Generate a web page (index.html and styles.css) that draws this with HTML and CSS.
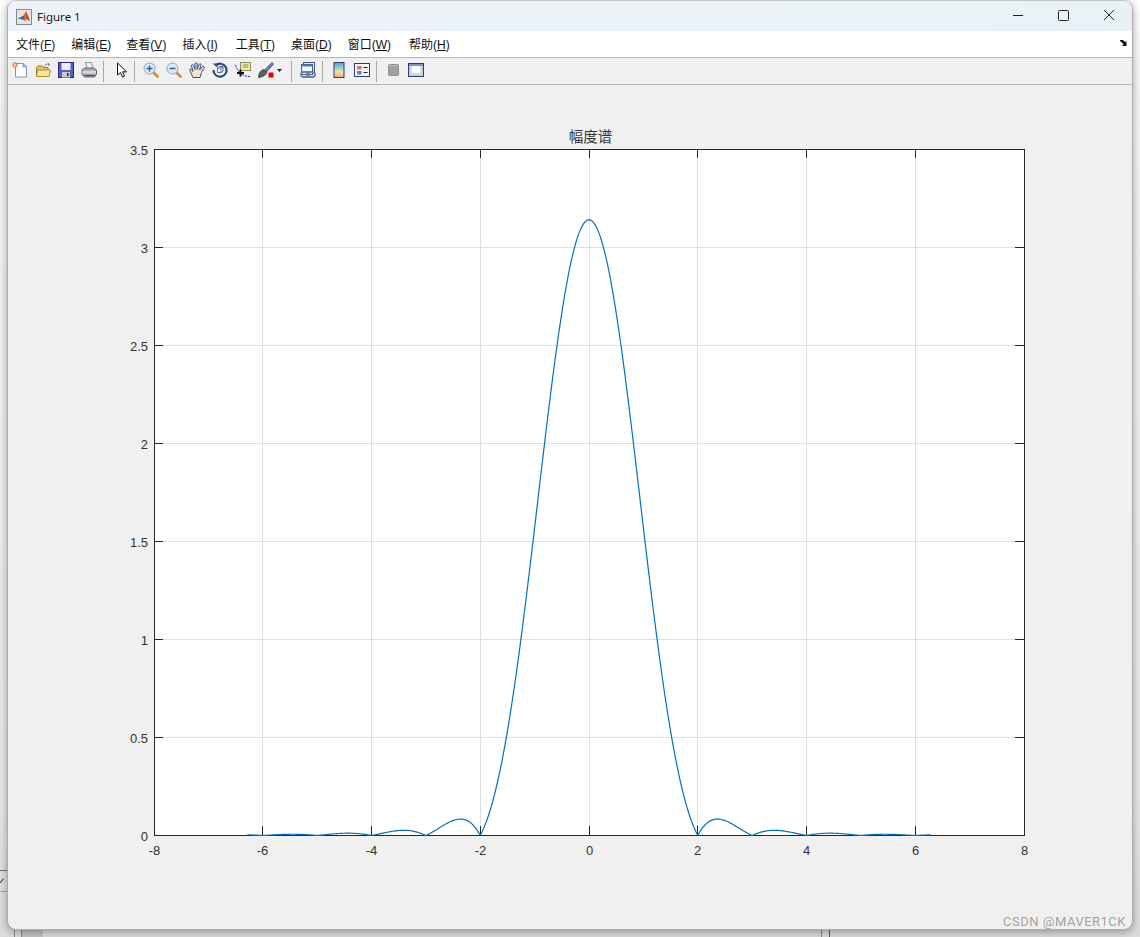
FILE: index.html
```html
<!DOCTYPE html>
<html lang="en">
<head>
    <meta charset="UTF-8">
    <title>Figure 1</title>
    <link rel="stylesheet" href="styles.css">
</head>
<body>
    <!-- bits of the windows behind the figure -->
    <div class="behind behind-row">
        <svg class="behind-pencil" viewBox="0 0 5 7"><path d="M0 6l1-2 3-4 1 1-3 4z" fill="#666"/></svg>
    </div>
    <div class="behind behind-strip"></div>
    <div class="behind behind-line1"></div>
    <div class="behind behind-line2"></div>
    <div class="behind behind-line3"></div>
    <div class="behind behind-line4"></div>

    <div class="window">
        <div class="titlebar">
            <svg class="app-icon" viewBox="0 0 16 16">
                <rect x="0.5" y="0.5" width="15" height="15" fill="#e4e4e4" stroke="#8a8a8a"/>
                <path d="M2 9.5l3-1.5 2-1 3-5 1.500 4L14 12l-3-2-2 2-3-2z" fill="#e8641b"/>
                <path d="M2 9.5l3-1.500 2-1 2 1-2 3-2-1z" fill="#2a6fb5"/>
                <path d="M10 2l1.500 4L14 12l-3-2z" fill="#c8351a"/>
            </svg>
            <span class="title-text">Figure 1</span>
            <div class="win-buttons">
                <svg class="win-btn" viewBox="0 0 46 30"><path d="M19 14.500h10" stroke="#222" fill="none"/></svg>
                <svg class="win-btn" viewBox="0 0 46 30"><rect x="18.500" y="9.500" width="10" height="10" rx="1" stroke="#222" fill="none"/></svg>
                <svg class="win-btn" viewBox="0 0 46 30"><path d="M18 9l10 10M28 9L18 19" stroke="#222" fill="none"/></svg>
            </div>
        </div>

        <div class="menubar">
            <span class="menu-item">文件(<u>F</u>)</span>
            <span class="menu-item menu-narrow">编辑(<u>E</u>)</span>
            <span class="menu-item">查看(<u>V</u>)</span>
            <span class="menu-item menu-wide">插入(<u>I</u>)</span>
            <span class="menu-item">工具(<u>T</u>)</span>
            <span class="menu-item">桌面(<u>D</u>)</span>
            <span class="menu-item menu-wide">窗口(<u>W</u>)</span>
            <span class="menu-item">帮助(<u>H</u>)</span>
            <svg class="dock-arrow" viewBox="0 0 7 6">
                <path d="M0 0h3l2 2 1.500-1v5H2l1.500-1.500L1 1.500H0z" fill="#111"/>
            </svg>
        </div>

        <div class="toolbar">
            <!-- new -->
            <div class="tool"><svg class="icon" viewBox="0 0 16 16">
                <path d="M3.500 1.500h7.500l3.500 3.500v10H3.500z" fill="#fff" stroke="#7f93b5"/>
                <path d="M11 1.500V5h3.500z" fill="#d5deea" stroke="#7f93b5"/>
                <circle cx="3" cy="3" r="2.200" fill="#fbc8a8" stroke="#e2683a"/>
            </svg></div>
            <!-- open -->
            <div class="tool"><svg class="icon" viewBox="0 0 16 16">
                <path d="M1.500 14V5.500L3 4h4l1 1.500h5V14z" fill="#e9c65c" stroke="#9a8132"/>
                <path d="M1.500 14.500l1-6.500h13l-1.500 6.500z" fill="#fbe596" stroke="#a98c36"/>
                <path d="M9.500 4.500C10 2.500 12 1.500 14 2.500M13 1l1.500 1.500L13 4" fill="none" stroke="#6d87a8"/>
            </svg></div>
            <!-- save -->
            <div class="tool"><svg class="icon" viewBox="0 0 16 16">
                <rect x="0.500" y="0.500" width="15" height="15" fill="#5a5cbc" stroke="#2b2b78"/>
                <rect x="3.500" y="1" width="9" height="7" fill="#eeeef8"/>
                <rect x="4" y="10" width="8" height="5.500" fill="#c9c9d2"/>
                <rect x="9" y="11" width="1.500" height="3" fill="#222"/>
            </svg></div>
            <!-- print -->
            <div class="tool"><svg class="icon" viewBox="0 0 16 16">
                <path d="M4.500 0.500h6l1.500 6H6z" fill="#eef0f2" stroke="#8c9298"/>
                <path d="M1 8l3-2h8.500L15.500 8v4l-2 3H3.500L1 12z" fill="#a9adb1" stroke="#62666a"/>
                <path d="M1.500 9h13.500v2.500H1.500z" fill="#d8dadc"/>
                <path d="M3.500 13.500h10" stroke="#44474a"/>
            </svg></div>
            <div class="tool-sep"></div>
            <!-- pointer -->
            <div class="tool"><svg class="icon" viewBox="0 0 16 16">
                <path d="M5.500 1v12l3-2.500 2 4.500 2-1-2-4.200h4z" fill="#fff" stroke="#111"/>
            </svg></div>
            <div class="tool-sep"></div>
            <!-- zoom in -->
            <div class="tool"><svg class="icon" viewBox="0 0 16 16">
                <path d="M10 10l4.500 4.500" stroke="#d98c2a" stroke-width="2.600" stroke-linecap="round"/>
                <circle cx="6.500" cy="6.500" r="5.500" fill="#dcebf7" stroke="#8aa4bb"/>
                <path d="M3.500 6.500h6M6.500 3.500v6" stroke="#23609c" stroke-width="1.400"/>
            </svg></div>
            <!-- zoom out -->
            <div class="tool"><svg class="icon" viewBox="0 0 16 16">
                <path d="M10 10l4.500 4.500" stroke="#d98c2a" stroke-width="2.600" stroke-linecap="round"/>
                <circle cx="6.500" cy="6.500" r="5.500" fill="#dcebf7" stroke="#8aa4bb"/>
                <path d="M3.500 6.500h6" stroke="#23609c" stroke-width="1.400"/>
            </svg></div>
            <!-- pan -->
            <div class="tool"><svg class="icon" viewBox="0 0 16 16">
                <path d="M4 15.500L0.800 8.500c-.6-1.500 1-2.300 1.900-1L4 9.500 2.500 4c-.4-1.500 1.500-2.200 2.100-.7L6 7.500 6 1.800c0-1.500 2.200-1.500 2.200 0V7.500L10 2.500c.5-1.400 2.300-.9 2 .6L10.500 8l2.800-3.300c1-1.100 2.500 0 1.800 1.200L12.500 10.500l-1.500 5z" fill="#fbe0c8" stroke="#33508a"/>
            </svg></div>
            <!-- rotate -->
            <div class="tool"><svg class="icon" viewBox="0 0 16 16">
                <path d="M3.500 3.500A6.500 6.500 0 1 1 1.500 8" fill="none" stroke="#2d4a7d" stroke-width="2.200"/>
                <path d="M0.500 1.500h5v4z" fill="#2d4a7d"/>
                <path d="M5.500 6l2-1.500h3.500v4.500l-2 1.500H5.500z M5.500 6h3.500v4.500M9 6l2-1.500" fill="#fff" stroke="#2d4a7d" stroke-width=".8"/>
            </svg></div>
            <!-- data cursor -->
            <div class="tool"><svg class="icon" viewBox="0 0 16 16">
                <path d="M0.500 3C2 7 4 11 8 13c2 1 4 1.500 7 1.500" fill="none" stroke="#2430c8" stroke-dasharray="2 1"/>
                <rect x="5.500" y="0.500" width="10" height="8" fill="#f6eda2" stroke="#8c8a5c"/>
                <path d="M7.500 3h6M7.500 5h6" stroke="#8c8a5c"/>
                <path d="M5.500 7.500v7M2 11h7" stroke="#111" stroke-width="2"/>
            </svg></div>
            <!-- brush -->
            <div class="tool tool-brush"><svg class="icon" viewBox="0 0 16 16">
                <path d="M7 7.500L14 0.500l1.500 1.500L9 9.500z" fill="#6f83b8" stroke="#39456e" stroke-width=".8"/>
                <path d="M0.500 15.500c0-3.500 1.500-7.500 5.500-8l3 2.500c-.5 3-5 5.500-8.500 5.500z" fill="#5d5d5d" stroke="#333" stroke-width=".6"/>
                <rect x="10.500" y="10.500" width="5" height="5" fill="#f40000"/>
            </svg></div>
            <svg class="tool-drop" viewBox="0 0 5 3"><path d="M0 0h5L2.500 3z" fill="#222"/></svg>
            <div class="tool-sep"></div>
            <!-- link -->
            <div class="tool"><svg class="icon" viewBox="0 0 16 16">
                <rect x="3.500" y="0.500" width="11" height="9" fill="#dfe6f2" stroke="#3f5a8a"/>
                <rect x="1.500" y="2.500" width="11" height="10" fill="#f3f6fb" stroke="#3f5a8a"/>
                <path d="M1.500 2.500h11v2h-11z" fill="#5d78a8"/>
                <rect x="1" y="10" width="8" height="5" rx="2.500" fill="none" stroke="#6c7f99" stroke-width="1.800"/>
                <rect x="7" y="10" width="8" height="5" rx="2.500" fill="none" stroke="#6c7f99" stroke-width="1.800"/>
            </svg></div>
            <div class="tool-sep"></div>
            <!-- colorbar -->
            <div class="tool"><svg class="icon" viewBox="0 0 16 16">
                <defs>
                    <linearGradient id="cbar" x1="0" y1="0" x2="0" y2="1">
                        <stop offset="0" stop-color="#6d8ee0"/>
                        <stop offset=".35" stop-color="#8fd6c8"/>
                        <stop offset=".65" stop-color="#f1e79a"/>
                        <stop offset="1" stop-color="#eda28c"/>
                    </linearGradient>
                </defs>
                <rect x="3" y="0.500" width="10" height="15" fill="url(#cbar)" stroke="#2b3d74"/>
            </svg></div>
            <!-- legend -->
            <div class="tool"><svg class="icon" viewBox="0 0 16 16">
                <rect x="0.500" y="1.500" width="15" height="13" fill="#f6f7fb" stroke="#2b3d74"/>
                <rect x="3" y="4" width="4.500" height="3.500" fill="#ee6d72"/>
                <rect x="3" y="9" width="4.500" height="3.500" fill="#6d74e6"/>
                <path d="M9.500 5.500h4M9.500 10.500h4" stroke="#222"/>
            </svg></div>
            <div class="tool-sep"></div>
            <!-- hide plot tools -->
            <div class="tool"><svg class="icon" viewBox="0 0 16 16">
                <rect x="3.500" y="2.500" width="10" height="11" rx="1" fill="#a2a2a2" stroke="#8e8e8e"/>
                <path d="M4 3.500h9" stroke="#c0c0c0"/>
            </svg></div>
            <!-- show plot tools -->
            <div class="tool"><svg class="icon" viewBox="0 0 16 16">
                <rect x="0.500" y="1.500" width="15" height="13" fill="#fff" stroke="#2b3d74"/>
                <rect x="1" y="2" width="14" height="2" fill="#7f93bd"/>
                <rect x="1" y="4" width="2.500" height="10" fill="#c9cedb"/>
                <rect x="12.500" y="4" width="2.500" height="10" fill="#c9cedb"/>
                <rect x="3.500" y="11.500" width="9" height="2.500" fill="#c9cedb"/>
            </svg></div>
        </div>

        <div class="figure">
            <svg id="plot" class="plot" viewBox="8 85 1124 843"></svg>
            <div class="watermark">CSDN @MAVER1CK</div>
        </div>
    </div>

    <script src="script.js"></script>
</body>
</html>
```

FILE: styles.css
```css
body {
    margin: 0;
    width: 1140px;
    height: 937px;
    overflow: hidden;
    position: relative;
    background: linear-gradient(to bottom, #ffffff 0, #f6f6f6 100px, #e8e8e8 800px, #dcdcdc 100%);
    font-family: "Liberation Sans", "Noto Sans CJK SC", sans-serif;
}
.behind {
    position: absolute;
}
.behind-row {
    left: 0;
    top: 870px;
    width: 8px;
    height: 20px;
    border-top: 1px solid #6e6e6e;
    border-bottom: 1px solid #a8a8a8;
}
.behind-pencil {
    display: block;
    width: 5px;
    height: 7px;
    margin: 7px 0 0 -1px;
}
.behind-strip {
    left: 22px;
    top: 928px;
    width: 21px;
    height: 9px;
    background-color: #c4c4c4;
}
.behind-line1, .behind-line2, .behind-line3, .behind-line4 {
    top: 928px;
    width: 1px;
    height: 9px;
    background-color: #8a8a8a;
}
.behind-line1 { left: 14px; }
.behind-line2 { left: 21px; }
.behind-line3 { left: 821px; }
.behind-line4 { left: 829px; background-color: #555; }

.window {
    position: relative;
    box-sizing: border-box;
    width: 1126px;
    height: 930px;
    margin-left: 7px;
    display: flex;
    flex-direction: column;
    background-color: #f0f0f0;
    border: 1px solid #acacac;
    border-top-color: #c4c4c4;
    border-radius: 9px;
    box-shadow: 0 2px 9px rgba(0, 0, 0, 0.35);
    overflow: hidden;
}
.titlebar {
    height: 30px;
    display: flex;
    align-items: center;
    padding-left: 8px;
    background: linear-gradient(to right, #eef2f9, #e8f2f6);
}
.app-icon {
    width: 16px;
    height: 16px;
    margin-top: 1px;
}
.title-text {
    margin-left: 5px;
    font-family: "Noto Sans", sans-serif;
    font-size: 11.5px;
    color: #1a1a1a;
}
.win-buttons {
    margin-left: auto;
    display: flex;
}
.win-btn {
    width: 46px;
    height: 30px;
}
.menubar {
    box-sizing: border-box;
    height: 26px;
    display: flex;
    align-items: center;
    padding: 0 5px 2px 8px;
    background-color: #fff;
    font-size: 12px;
    color: #111;
    gap: 16px;
}
.menu-narrow {
    margin-right: -1px;
}
.menu-wide {
    margin-right: 2px;
}
.dock-arrow {
    width: 7px;
    height: 6px;
    margin-left: auto;
}
.toolbar {
    box-sizing: border-box;
    height: 28px;
    display: flex;
    align-items: center;
    border-top: 1px solid #b4b4b4;
    border-bottom: 1px solid #b4b4b4;
    background-color: #f0f0f0;
}
.tool {
    width: 23px;
    height: 20px;
    margin-bottom: 3px;
    display: flex;
    align-items: center;
    justify-content: center;
}
.icon {
    width: 16px;
    height: 16px;
}
.tool-drop {
    width: 5px;
    height: 3px;
    margin: 0 6px 2px 1px;
}
.tool-brush {
    margin-right: -1px;
}
.tool-sep {
    width: 1px;
    height: 21px;
    margin: 0 4px 0 3px;
    background-color: #a9a9a9;
}
.figure {
    flex: 1;
    position: relative;
}
.plot {
    display: block;
    width: 1124px;
    height: 843px;
}
.watermark {
    position: absolute;
    right: 6px;
    bottom: 0;
    font-family: "Roboto", sans-serif;
    font-size: 13px;
    letter-spacing: 0.5px;
    color: rgba(90, 90, 90, 0.55);
}
.tick-label {
    font-family: "Liberation Sans", sans-serif;
    font-size: 13px;
    fill: #333;
}
.plot-title {
    font-family: "Noto Sans CJK SC", sans-serif;
    font-size: 14.5px;
    fill: #333;
}
```

FILE: script.js
```js
const SVG_NS = "http://www.w3.org/2000/svg";
const plot = document.getElementById("plot");

// Axes box in page pixels
const LEFT = 154, RIGHT = 1024, TOP = 149, BOTTOM = 835;
const TICK = 9;

const xPos = x => LEFT + (x + 8) * (RIGHT - LEFT) / 16;
const yPos = y => BOTTOM - y * (BOTTOM - TOP) / 3.5;

function add(tag, attrs, text) {
    const el = document.createElementNS(SVG_NS, tag);
    for (const key in attrs) el.setAttribute(key, attrs[key]);
    if (text !== undefined) el.textContent = text;
    plot.appendChild(el);
    return el;
}

function line(x1, y1, x2, y2, color) {
    add("line", { x1, y1, x2, y2, stroke: color, "stroke-width": 1 });
}

add("rect", { x: LEFT, y: TOP, width: RIGHT - LEFT, height: BOTTOM - TOP, fill: "#fff" });

// Grid first, then ticks on all four sides
for (let x = -8; x <= 8; x += 2) {
    const px = Math.floor(xPos(x)) + 0.5;
    if (x > -8 && x < 8) {
        line(px, TOP, px, BOTTOM, "#dfdfdf");
        line(px, TOP, px, TOP + TICK, "#262626");
        line(px, BOTTOM, px, BOTTOM - TICK, "#262626");
    }
    add("text", { class: "tick-label", x: px, y: 855, "text-anchor": "middle" }, String(x));
}
for (let i = 0; i <= 7; i++) {
    const y = i / 2;
    const py = Math.floor(yPos(y)) + 0.5;
    if (i > 0 && i < 7) {
        line(LEFT, py, RIGHT, py, "#dfdfdf");
        line(LEFT, py, LEFT + TICK, py, "#262626");
        line(RIGHT, py, RIGHT - TICK, py, "#262626");
    }
    add("text", { class: "tick-label", x: 148, y: py + 5.5, "text-anchor": "end" }, String(y));
}

add("rect", {
    x: LEFT + 0.5, y: TOP + 0.5, width: RIGHT - LEFT, height: BOTTOM - TOP,
    fill: "none", stroke: "#262626"
});
add("text", { class: "plot-title", x: 590.5, y: 142, "text-anchor": "middle" }, "幅度谱");

// Magnitude spectrum of the raised cosine window on [-pi, pi]
function spectrum(w) {
    const near = (a, b) => Math.abs(a - b) < 1e-9;
    if (near(w, 0)) return Math.PI;
    if (near(Math.abs(w), 1)) return Math.PI / 2;
    return Math.abs(Math.sin(Math.PI * w) / (w * (1 - w * w)));
}

const points = [];
const STEPS = 620;
for (let i = 0; i <= STEPS; i++) {
    const w = -2 * Math.PI + i * 4 * Math.PI / STEPS;
    points.push(xPos(w).toFixed(2) + "," + (yPos(spectrum(w)) + 0.5).toFixed(2));
}
add("polyline", { points: points.join(" "), fill: "none", stroke: "#0072bd", "stroke-width": 1.2 });
```
